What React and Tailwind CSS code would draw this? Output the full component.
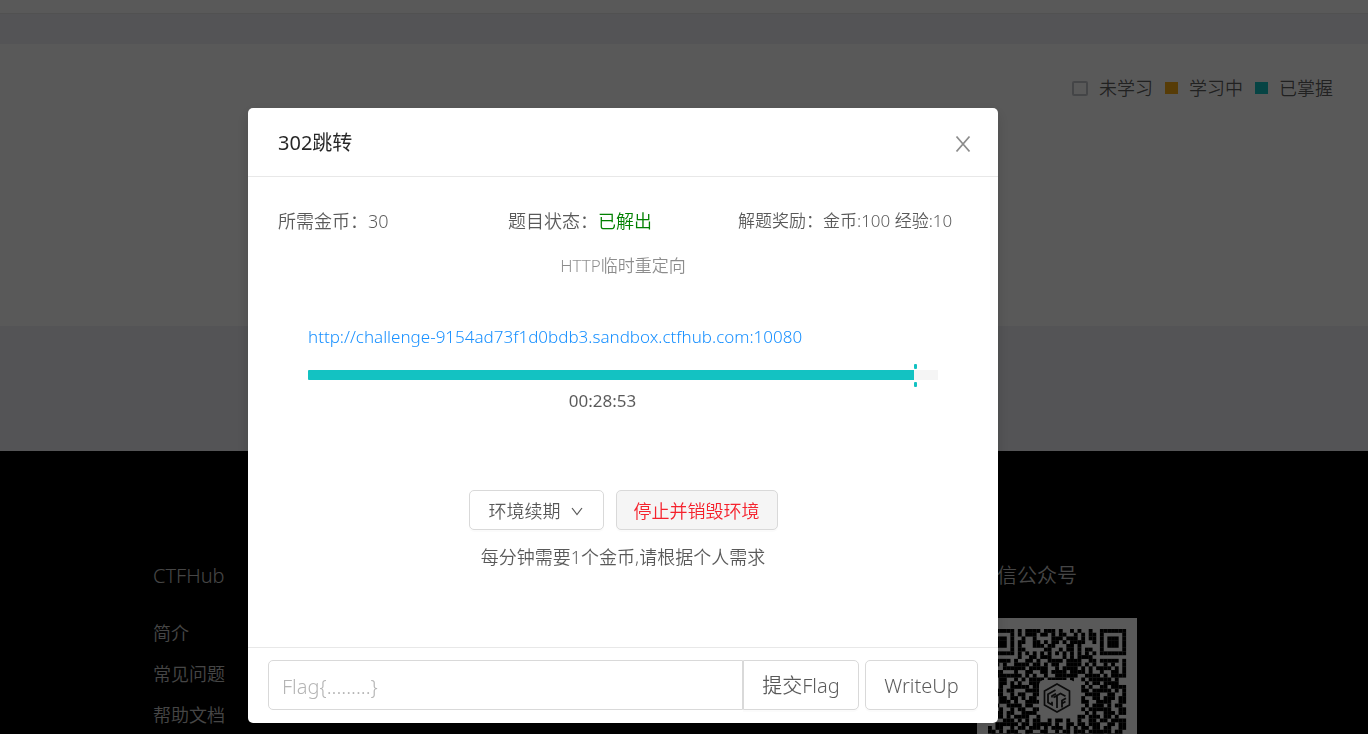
import { useState } from "react";

const legend = [
  { label: "未学习", swatch: "h-[15px] w-4 rounded-xs border-2 border-[#c4c6cc]" },
  { label: "学习中", swatch: "h-3 w-[13px] bg-[#faad14]" },
  { label: "已掌握", swatch: "h-3 w-[13px] bg-[#13c2c2]" },
];

const helpLinks = ["简介", "常见问题", "帮助文档"];

const qrRows = [
  "#######.#.####.###.#..#.#..#..#######",
  "#.....#.#.###.##.#.##..#.#.##.#.....#",
  "#.###.#..#..#....###.###.#.##.#.###.#",
  "#.###.#.##..##.#.##.#.####..#.#.###.#",
  "#.###.#.#...###.##...##.#.....#.###.#",
  "#.....#.##.....##..#.##.#.##..#.....#",
  "#######.#.#.#.#.#.#.#.#.#.#.#.#######",
  "........#..##.###...#.#.####.........",
  "#.####.#..##.#..####.####..##.#####.#",
  ".##.#..####.##.#.##..####.#.#..#.#..#",
  "##..######.#####..#.####.#.#.####.#.#",
  "..##...#..##..##.####.####.#..#..##.#",
  "#.#######.#.#..#..######..####.#.####",
  ".#.##..#.#.####.#####.#..#.######.#..",
  "##.##.#.#..###............#.##.####..",
  ".#.#..#####.##...........#.#..##.####",
  "#.##.##...####...........##.#####.#.#",
  ".###..#.##..##............####..##..#",
  "##.##.##.#.##............#..##.###.##",
  "#..###.#..####...........##..####..##",
  ".##..####.##..............#.###.#.##.",
  "##.#..#.##..##...........#.######..##",
  "#.##.##..####.............#.#..###.##",
  ".###.#.####..#..........##.###.##.#..",
  "##..###.#.#.##..#.##.#..#..##.##.####",
  "..######.##.#####.#..##.##.###..##.##",
  "#.##..#.##.###.#.###.#.#.##.##.##..##",
  "##.#.###..##..##..#.##.###.######.##.",
  ".##.##.##.#.##.###.#.#.#.##.###.####.",
  "#.#..####.##.#..#.##.##.##.#####..##.",
  "#######.#.#..##.##.#.#..#.###.#.###.#",
  "#.....#..##.##.#..##.##.####...##..##",
  "#.###.#.##.#..##.##.#.#..#.######.#..",
  "#.###.#..##.##.#.#..###.##.#.##..##.#",
  "#.###.#.##..#.###.##..#.#.##.#.###.##",
  "#.....#.#.##.#..#.#.##.##..##.#.##.#.",
  "#######.##.#.##.##.#.#.#.##.##.#..###",
];

function QrCode() {
  return (
    <svg viewBox="0 0 160 160" className="block h-40 w-40 bg-white" role="img">
      <g transform="translate(11 11) scale(3.73)" fill="#000">
        {qrRows.map((row, y) =>
          [...row].map((cell, x) =>
            cell === "#" ? (
              <rect key={`${x}-${y}`} x={x} y={y} width="1.03" height="1.03" />
            ) : null
          )
        )}
      </g>
      <rect x="62" y="62" width="36" height="36" rx="5" fill="#fff" />
      <g fill="none" stroke="#222" strokeWidth="1.7">
        <path d="M80 66l12.500 7v14l-12.500 7-12.500-7v-14z" />
        <path
          strokeWidth="1.8"
          d="M78.500 72l-7.500 4.300v8.200l4 2.300v-3M75 79.500v-1.500l4-2.300M76.500 79.500l7-4 5 2.800M80 77.500v12.500M85 89.500v-7l4-2.300M85 85.500l3.500-2"
        />
      </g>
    </svg>
  );
}

function Page() {
  return (
    <div className="flex h-screen flex-col overflow-hidden bg-[#f0f1f5]">
      <div className="h-[14px] shrink-0 border-b border-[#e8e8e8] bg-white" />
      <section className="mt-[30px] h-[282px] shrink-0 bg-white pt-[31px] pr-[35px]">
        <ul className="flex items-center justify-end gap-3 text-black/65">
          {legend.map((item) => (
            <li key={item.label} className="flex items-center gap-[11px] leading-[26px]">
              <span className={item.swatch} />
              {item.label}
            </li>
          ))}
        </ul>
      </section>
      <footer className="mt-[125px] grid grow grid-cols-[272px_552px_auto] bg-black pt-[110px] pl-[153px] text-[#c8c8c8]">
        <div>
          <h2 className="mb-[29px] text-xl leading-[30px]">CTFHub</h2>
          <ul className="flex flex-col gap-[15px]">
            {helpLinks.map((label) => (
              <li key={label} className="leading-[26px]">
                <a href="#">{label}</a>
              </li>
            ))}
          </ul>
        </div>
        <div className="pt-[140px] leading-[26px]">
          <a href="#">友情链接</a>
        </div>
        <div>
          <h2 className="mb-[27px] text-xl leading-[30px]">微信公众号</h2>
          <QrCode />
        </div>
      </footer>
    </div>
  );
}

function TimeBar({ percent }) {
  return (
    <div className="relative mt-5 h-[10px] bg-[#f5f5f5]">
      <div className="h-full rounded-l-[1px] bg-[#13c2c2]" style={{ width: `${percent}%` }} />
      <div
        className="absolute -top-[6px] -bottom-[7px] flex w-[3px] flex-col justify-between"
        style={{ left: `${percent}%` }}
      >
        <span className="h-[5px] rounded-[1px] bg-[#13c2c2]" />
        <span className="h-[5px] rounded-[1px] bg-[#13c2c2]" />
      </div>
    </div>
  );
}

function ChallengeModal() {
  const [flag, setFlag] = useState("");

  return (
    <div
      role="dialog"
      aria-labelledby="modal-title"
      className="w-[750px] rounded-[5px] bg-white text-black/65 shadow-[0_5px_15px_rgba(0,0,0,0.15)]"
    >
      <header className="flex items-end justify-between border-b border-[#e8e8e8] px-[30px] pt-[21px] pb-[19px]">
        <h1 id="modal-title" className="text-xl leading-7 font-normal text-black/85">
          302跳转
        </h1>
        <button type="button" aria-label="Close" className="-mr-2 p-1 text-black/45">
          <svg viewBox="0 0 18 18" className="h-[18px] w-[18px]" fill="none" stroke="currentColor" strokeWidth="1.8">
            <path d="M2.500 1.500L15.500 16.500M15.500 1.500L2.500 16.500" />
          </svg>
        </button>
      </header>

      <div className="px-[30px] pt-[31px] pb-[77px] leading-[26px]">
        <div className="grid grid-cols-3 whitespace-nowrap">
          <div>所需金币：30</div>
          <div>
            题目状态：<span className="text-[#008000]">已解出</span>
          </div>
          <div className="text-[17px]">解题奖励：金币:100 经验:10</div>
        </div>
        <p className="mt-[19px] text-center text-[17px] text-black/45">HTTP临时重定向</p>

        <div className="mt-[45px] px-[30px]">
          <a href="#" className="block text-[17px] text-[#1890ff]">
            http://challenge-9154ad73f1d0bdb3.sandbox.ctfhub.com:10080
          </a>
          <TimeBar percent={96.2} />
          <div className="mt-2 pr-[41px] text-center text-[17px] font-normal">00:28:53</div>
        </div>

        <div className="mt-[76px] flex justify-center gap-3">
          <button
            type="button"
            className="flex h-10 items-center gap-[9px] rounded-[5px] border border-[#d9d9d9] px-[19px] pt-0.5 shadow-[0_2px_0_rgba(0,0,0,0.015)]"
          >
            环境续期
            <svg viewBox="0 0 14 14" className="h-[14px] w-[14px]" fill="none" stroke="currentColor" strokeWidth="1.2">
              <path d="M2 4L7 10.500L12 4" />
            </svg>
          </button>
          <button
            type="button"
            className="h-10 rounded-[5px] border border-[#d9d9d9] bg-[#f5f5f5] px-[17px] pt-0.5 text-[#f5222d] shadow-[0_2px_0_rgba(0,0,0,0.015)]"
          >
            停止并销毁环境
          </button>
        </div>
        <p className="mt-[14px] text-center">每分钟需要1个金币,请根据个人需求</p>
      </div>

      <footer className="flex border-t border-[#e8e8e8] px-5 pt-3 pb-[13px] text-xl">
        <input
          type="text"
          aria-label="Flag"
          placeholder="Flag{.........}"
          value={flag}
          onChange={(e) => setFlag(e.target.value)}
          className="h-[50px] min-w-0 grow rounded-l-[5px] border border-[#d9d9d9] px-[13px] pt-0.5 outline-none placeholder:text-[#b5b5b5]"
        />
        <button
          type="button"
          className="h-[50px] w-[116px] shrink-0 rounded-r-[5px] border border-[#d9d9d9] pt-0.5 shadow-[0_2px_0_rgba(0,0,0,0.015)]"
        >
          提交Flag
        </button>
        <button
          type="button"
          className="ml-[6px] h-[50px] w-[113px] shrink-0 rounded-[5px] border border-[#d9d9d9] pt-0.5 shadow-[0_2px_0_rgba(0,0,0,0.015)]"
        >
          WriteUp
        </button>
      </footer>
    </div>
  );
}

export default function App() {
  return (
    <div className="font-['Noto_Sans','Noto_Sans_CJK_SC',sans-serif] text-lg font-[350]">
      <Page />
      <div className="fixed inset-0 flex items-start justify-center bg-black/65 pt-[108px] pr-[122px]">
        <ChallengeModal />
      </div>
    </div>
  );
}
